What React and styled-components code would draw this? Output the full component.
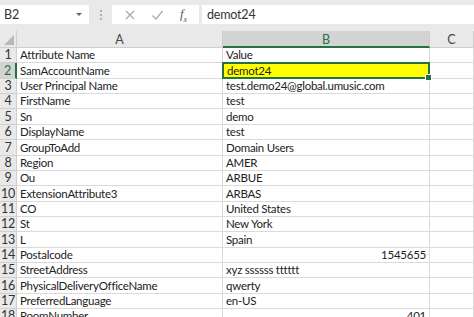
import React from "react";
import styled, { createGlobalStyle } from "styled-components";

const GlobalStyle = createGlobalStyle`
  html, body {
    margin: 0;
    padding: 0;
    background: #ffffff;
    overflow: hidden;
  }
  body {
    font-family: Lato, "Liberation Sans", sans-serif;
    color: #222;
  }
`;

const ROW_H = 15.36;

const rows = [
  ["Attribute Name", "Value"],
  ["SamAccountName", "demot24"],
  ["User Principal Name", "test.demo24@global.umusic.com"],
  ["FirstName", "test"],
  ["Sn", "demo"],
  ["DisplayName", "test"],
  ["GroupToAdd", "Domain Users"],
  ["Region", "AMER"],
  ["Ou", "ARBUE"],
  ["ExtensionAttribute3", "ARBAS"],
  ["CO", "United States"],
  ["St", "New York"],
  ["L", "Spain"],
  ["Postalcode", "1545655", true],
  ["StreetAddress", "xyz ssssss tttttt"],
  ["PhysicalDeliveryOfficeName", "qwerty"],
  ["PreferredLanguage", "en-US"],
  ["RoomNumber", "401", true],
];

const Page = styled.div`
  width: 474px;
  height: 317px;
  overflow: hidden;
  background: #ffffff;
`;

const FormulaBar = styled.div`
  height: 31px;
  background: #e9e9e9;
  display: flex;
  align-items: flex-start;
  padding-top: 5px;
  box-sizing: border-box;
`;

const NameBox = styled.div`
  width: 89px;
  height: 19px;
  background: #fff;
  display: flex;
  align-items: center;
  justify-content: space-between;
  padding: 0 7px 0 4px;
  box-sizing: border-box;
  font-size: 12.5px;
  color: #333;
`;

const Caret = styled.span`
  width: 0;
  height: 0;
  border-left: 3px solid transparent;
  border-right: 3px solid transparent;
  border-top: 3px solid #666;
`;

const Grip = styled.div`
  width: 23px;
  height: 19px;
  display: flex;
  flex-direction: column;
  align-items: center;
  justify-content: center;
  gap: 2px;
  & span {
    width: 2px;
    height: 2px;
    background: #b0b0b0;
  }
`;

const ButtonBox = styled.div`
  width: 87px;
  height: 19px;
  background: #fff;
  display: flex;
  align-items: center;
  justify-content: space-around;
  padding: 0 4px;
  box-sizing: border-box;
`;

const Fx = styled.span`
  font-family: "Liberation Serif", serif;
  font-style: italic;
  font-size: 13px;
  color: #555;
  & sub {
    font-size: 8px;
  }
`;

const FormulaInput = styled.div`
  flex: 1;
  margin-left: 3px;
  height: 19px;
  background: #fff;
  display: flex;
  align-items: center;
  padding-left: 5px;
  font-size: 12.5px;
  letter-spacing: -0.2px;
  color: #333;
`;

const Sheet = styled.div`
  display: grid;
  grid-template-columns: 17px 206px 207px 1fr;
  grid-template-rows: 17px;
  grid-auto-rows: ${ROW_H}px;
`;

const Corner = styled.div`
  background: #e9e9e9;
  border-right: 1px solid #cfcfcf;
  border-bottom: 1px solid #cfcfcf;
  position: relative;
  &::after {
    content: "";
    position: absolute;
    right: 2px;
    bottom: 2px;
    width: 0;
    height: 0;
    border-left: 10px solid transparent;
    border-bottom: 10px solid #b8b8b8;
  }
`;

const ColHead = styled.div`
  background: ${(p) => (p.$active ? "#d3d3d3" : "#e9e9e9")};
  color: ${(p) => (p.$active ? "#217346" : "#444")};
  border-right: 1px solid #cfcfcf;
  border-bottom: ${(p) => (p.$active ? "2px solid #217346" : "1px solid #cfcfcf")};
  display: flex;
  align-items: center;
  justify-content: center;
  font-size: 12.5px;
  padding-top: 1px;
  box-sizing: border-box;
`;

const RowHead = styled.div`
  background: ${(p) => (p.$active ? "#d3d3d3" : "#e9e9e9")};
  color: ${(p) => (p.$active ? "#217346" : "#333")};
  border-right: ${(p) => (p.$active ? "2px solid #217346" : "1px solid #cfcfcf")};
  border-bottom: 1px solid #cfcfcf;
  display: flex;
  align-items: flex-end;
  justify-content: center;
  font-size: 12.5px;
  letter-spacing: -0.3px;
  line-height: 13px;
  padding-bottom: 1px;
  box-sizing: border-box;
`;

const Cell = styled.div`
  border-right: 1px solid #dadada;
  border-bottom: 1px solid #dadada;
  display: flex;
  align-items: flex-end;
  justify-content: ${(p) => (p.$num ? "flex-end" : "flex-start")};
  padding: 0 3px 1px 3px;
  font-size: 11.5px;
  letter-spacing: -0.25px;
  line-height: 13px;
  white-space: nowrap;
  overflow: visible;
  box-sizing: border-box;
  color: #222;
`;

const SelectedCell = styled(Cell)`
  background: #ffff00;
  border: 2px solid #217346;
  margin: -1px 0 0 -1px;
  padding: 0 2px 0 3px;
  position: relative;
  &::after {
    content: "";
    position: absolute;
    right: -4px;
    bottom: -4px;
    width: 5px;
    height: 5px;
    background: #217346;
    border: 1px solid #fff;
  }
`;

const XIcon = () => (
  <svg width="12" height="12" viewBox="0 0 12 12">
    <path d="M2 2 L10 10 M10 2 L2 10" stroke="#a9a9a9" strokeWidth="1.2" fill="none" />
  </svg>
);

const CheckIcon = () => (
  <svg width="13" height="12" viewBox="0 0 13 12">
    <path d="M1.5 6.5 L5 10 L11.5 2" stroke="#a9a9a9" strokeWidth="1.2" fill="none" />
  </svg>
);

export default function App() {
  return (
    <Page>
      <GlobalStyle />
      <FormulaBar>
        <NameBox>
          B2
          <Caret />
        </NameBox>
        <Grip>
          <span />
          <span />
          <span />
        </Grip>
        <ButtonBox>
          <XIcon />
          <CheckIcon />
          <Fx>
            f<sub>x</sub>
          </Fx>
        </ButtonBox>
        <FormulaInput>demot24</FormulaInput>
      </FormulaBar>

      <Sheet>
        <Corner />
        <ColHead>A</ColHead>
        <ColHead $active>B</ColHead>
        <ColHead>C</ColHead>
        {rows.map(([attr, value, num], i) => (
          <React.Fragment key={i}>
            <RowHead $active={i === 1}>{i + 1}</RowHead>
            <Cell>{attr}</Cell>
            {i === 1 ? (
              <SelectedCell>{value}</SelectedCell>
            ) : (
              <Cell $num={num}>{value}</Cell>
            )}
            <Cell />
          </React.Fragment>
        ))}
      </Sheet>
    </Page>
  );
}
